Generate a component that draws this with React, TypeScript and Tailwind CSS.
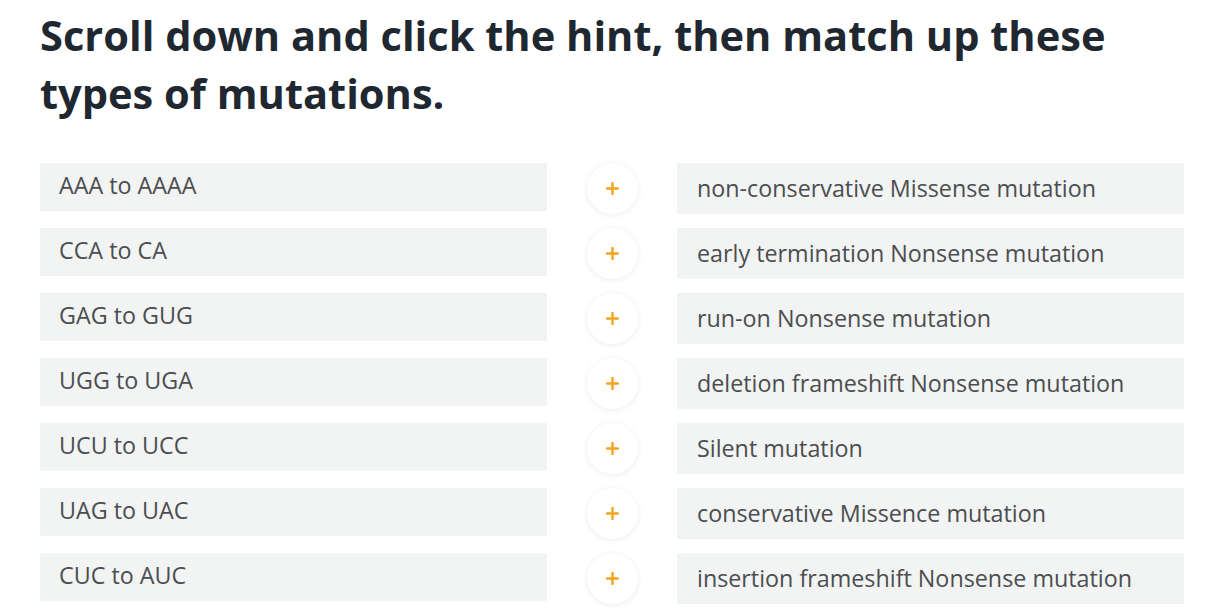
const rows = [
  ["AAA to AAAA", "non-conservative Missense mutation"],
  ["CCA to CA", "early termination Nonsense mutation"],
  ["GAG to GUG", "run-on Nonsense mutation"],
  ["UGG to UGA", "deletion frameshift Nonsense mutation"],
  ["UCU to UCC", "Silent mutation"],
  ["UAG to UAC", "conservative Missence mutation"],
  ["CUC to AUC", "insertion frameshift Nonsense mutation"],
];

function PlusButton() {
  return (
    <button className="flex h-[51px] w-[51px] items-center justify-center rounded-full bg-white shadow-[0_1px_6px_rgba(0,0,0,0.08)]">
      <svg width="13" height="13" viewBox="0 0 13 13">
        <path d="M6.5 1v11M1 6.5h11" stroke="#f5a31c" strokeWidth="2.4" strokeLinecap="round" />
      </svg>
    </button>
  );
}

export default function App() {
  return (
    <div className="h-[608px] w-full overflow-hidden bg-white px-10 pt-[6px] font-['Open_Sans',sans-serif]">
      <h1 className="text-[41.6px] font-bold leading-[58px] text-[#1f2830]">
        Scroll down and click the hint, then match up these
        <br />
        types of mutations.
      </h1>

      <div className="mt-[41px] flex flex-col gap-[14px]">
        {rows.map(([left, right]) => (
          <div key={left} className="grid grid-cols-[507px_130px_507px] items-start">
            <div className="flex h-[48px] items-center bg-[#f2f3f3] px-[19px] pb-[3px] text-[23.3px] text-[#4b4e50]">
              {left}
            </div>
            <div className="flex justify-center">
              <PlusButton />
            </div>
            <div className="flex h-[51px] items-center bg-[#f2f3f3] px-[20px] text-[23.3px] text-[#4b4e50]">
              {right}
            </div>
          </div>
        ))}
      </div>
    </div>
  );
}
